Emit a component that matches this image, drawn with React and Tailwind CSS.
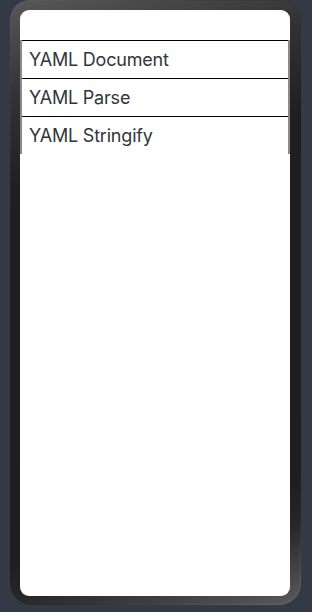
import React from "react";

const items = ["YAML Document", "YAML Parse", "YAML Stringify"];

export default function App() {
    return (
        <div className="w-[312px] h-[612px] bg-[#333a45] pl-[10px] overflow-hidden">
            {/* phone bezel */}
            <div className="w-[291px] h-[605px] rounded-b-[22px] rounded-t-[20px] p-[1px] bg-[linear-gradient(160deg,#5e5e5e_0%,#3a3a3a_12%,#1f1f1f_30%,#1e1e1e_80%,#2a2a2a_88%,#6d6d6d_100%)]">
                <div className="w-full h-full rounded-b-[21px] rounded-t-[19px] pt-[9px] pl-[9px] pr-[10px] pb-[8px] bg-[linear-gradient(165deg,#585858_0%,#333_14%,#1f1f1f_28%,#1e1e1e_82%,#262626_88%,#5a5a5a_100%)]">
                    {/* screen */}
                    <div className="w-full h-full bg-white rounded-[9px] pt-[30px] overflow-hidden">
                        <div className="border-x-2 border-[#8a8a8a]">
                            {items.map((label) => (
                                <div key={label} className="h-[38px] border-t border-black flex items-center px-[7px] text-[18px] text-[#33353a] font-['Inter',sans-serif] tracking-[-0.2px]">
                                    {label}
                                </div>
                            ))}
                        </div>
                    </div>
                </div>
            </div>
        </div>
    );
}
